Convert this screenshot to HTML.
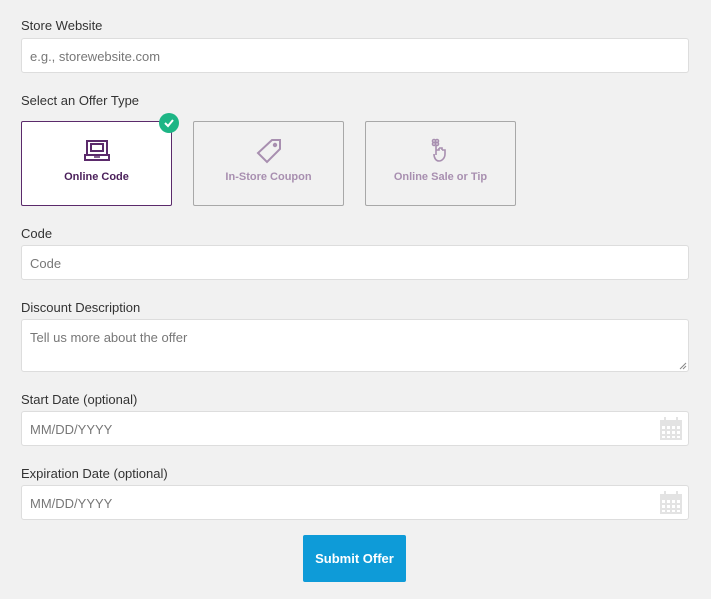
<!DOCTYPE html><html><head><style>
body{margin:0;background:#f1f1f1;font-family:"Liberation Sans",sans-serif;width:711px;height:599px;position:relative;overflow:hidden}
.l{position:absolute;left:21px;font-size:13px;color:#333}
.i{position:absolute;left:21px;width:668px;background:#fff;border:1px solid #ddd;border-radius:3px;font-size:13px;color:#777;box-sizing:border-box;padding-left:8px}
.c{position:absolute;top:121px;width:151px;height:85px;box-sizing:border-box;border:1px solid #a8a8a8;border-radius:2px;text-align:center;font-size:11px;font-weight:bold;color:#a88fb0}
.c svg{position:absolute;left:62px;top:16px}
.c span{position:absolute;top:49px;left:0;right:0}
.cal{position:absolute;right:6px;top:5px}
</style></head><body>
<div class="l" style="top:18px">Store Website</div>
<div class="i" style="top:38px;height:35px;line-height:35px">e.g., storewebsite.com</div>
<div class="l" style="top:93px">Select an Offer Type</div>
<div class="c" style="left:21px;background:#fff;border-color:#5b2a6b;color:#4a1f5a"><svg width="26" height="26" viewBox="0 0 26 26" fill="none" stroke="#5b2a6b" stroke-width="2"><rect x="3" y="3" width="20" height="14"/><rect x="7" y="6" width="12" height="7"/><path d="M1 17h24v5H1z"/><path d="M10 19h6" stroke-width="1.5"/></svg><span>Online Code</span></div>
<div style="position:absolute;left:159px;top:113px;width:20px;height:20px;border-radius:50%;background:#1db585"><svg width="20" height="20"><path d="M6 10l3 3 5-6" stroke="#fff" stroke-width="2" fill="none"/></svg></div>
<div class="c" style="left:193px"><svg width="26" height="26" viewBox="0 0 26 26" fill="none" stroke="#a88fb0" stroke-width="2"><path d="M16 2h8v9L11 24 2 15z"/><circle cx="19" cy="7" r="1.2" fill="#a88fb0"/></svg><span>In-Store Coupon</span></div>
<div class="c" style="left:365px"><svg width="26" height="26" viewBox="0 0 26 26" fill="none" stroke="#a88fb0" stroke-width="1.6"><circle cx="6" cy="3" r="1.5"/><circle cx="9" cy="3" r="1.5"/><circle cx="6" cy="6" r="1.5"/><circle cx="9" cy="6" r="1.5"/><path d="M8 8v9M8 12h3v-2M11 10h3v2M14 12h3v4c0 4-3 7-6 7s-5-3-5-7"/></svg><span>Online Sale or Tip</span></div>
<div class="l" style="top:226px">Code</div>
<div class="i" style="top:245px;height:35px;line-height:35px">Code</div>
<div class="l" style="top:300px">Discount Description</div>
<div class="i" style="top:319px;height:53px;padding-top:10px">Tell us more about the offer<svg style="position:absolute;right:1px;bottom:1px" width="8" height="8"><path d="M1 7L7 1M4 7L7 4" stroke="#888"/></svg></div>
<div class="l" style="top:392px">Start Date (optional)</div>
<div class="i" style="top:411px;height:35px;line-height:35px">MM/DD/YYYY<svg class="cal" width="22" height="24"><rect x="0" y="3" width="22" height="20" fill="#e3e3e3"/><rect x="4" y="0" width="2" height="5" fill="#e3e3e3"/><rect x="16" y="0" width="2" height="5" fill="#e3e3e3"/><g fill="#fff"><rect x="2" y="9" width="3" height="3"/><rect x="7" y="9" width="3" height="3"/><rect x="12" y="9" width="3" height="3"/><rect x="17" y="9" width="3" height="3"/><rect x="2" y="14" width="3" height="3"/><rect x="7" y="14" width="3" height="3"/><rect x="12" y="14" width="3" height="3"/><rect x="17" y="14" width="3" height="3"/><rect x="2" y="19" width="3" height="2"/><rect x="7" y="19" width="3" height="2"/><rect x="12" y="19" width="3" height="2"/><rect x="17" y="19" width="3" height="2"/></g></svg></div>
<div class="l" style="top:466px">Expiration Date (optional)</div>
<div class="i" style="top:485px;height:35px;line-height:35px">MM/DD/YYYY<svg class="cal" width="22" height="24"><rect x="0" y="3" width="22" height="20" fill="#e3e3e3"/><rect x="4" y="0" width="2" height="5" fill="#e3e3e3"/><rect x="16" y="0" width="2" height="5" fill="#e3e3e3"/><g fill="#fff"><rect x="2" y="9" width="3" height="3"/><rect x="7" y="9" width="3" height="3"/><rect x="12" y="9" width="3" height="3"/><rect x="17" y="9" width="3" height="3"/><rect x="2" y="14" width="3" height="3"/><rect x="7" y="14" width="3" height="3"/><rect x="12" y="14" width="3" height="3"/><rect x="17" y="14" width="3" height="3"/><rect x="2" y="19" width="3" height="2"/><rect x="7" y="19" width="3" height="2"/><rect x="12" y="19" width="3" height="2"/><rect x="17" y="19" width="3" height="2"/></g></svg></div>
<div style="position:absolute;left:303px;top:535px;width:103px;height:47px;background:#0e9bd8;border-radius:2px;color:#fff;font-size:13px;font-weight:bold;text-align:center;line-height:47px">Submit Offer</div>
</body></html>
